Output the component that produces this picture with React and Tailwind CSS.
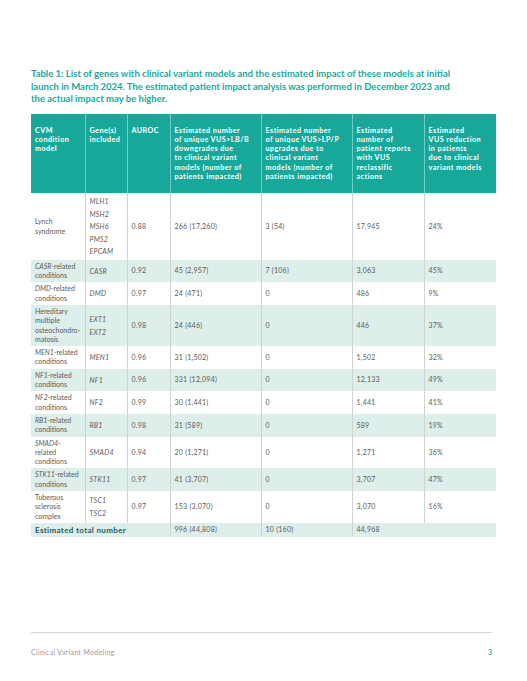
import React from 'react';

// condition lines follow the printed line breaks; the first part of "x-related" is the gene name in italics
const rows = [
  { cond: ['Lynch', 'syndrome'], genes: ['MLH1', 'MSH2', 'MSH6', 'PMS2', 'EPCAM'], auroc: '0.88', down: '266 (17,260)', up: '3 (54)', reports: '17,945', red: '24%' },
  { gene: 'CASR', cond: ['-related', 'conditions'], genes: ['CASR'], auroc: '0.92', down: '45 (2,957)', up: '7 (106)', reports: '3,063', red: '45%' },
  { gene: 'DMD', cond: ['-related', 'conditions'], genes: ['DMD'], auroc: '0.97', down: '24 (471)', up: '0', reports: '486', red: '9%' },
  { cond: ['Hereditary', 'multiple', 'osteochondro-', 'matosis'], genes: ['EXT1', 'EXT2'], auroc: '0.98', down: '24 (446)', up: '0', reports: '446', red: '37%' },
  { gene: 'MEN1', cond: ['-related', 'conditions'], genes: ['MEN1'], auroc: '0.96', down: '31 (1,502)', up: '0', reports: '1,502', red: '32%' },
  { gene: 'NF1', cond: ['-related', 'conditions'], genes: ['NF1'], auroc: '0.96', down: '331 (12,094)', up: '0', reports: '12,133', red: '49%' },
  { gene: 'NF2', cond: ['-related', 'conditions'], genes: ['NF2'], auroc: '0.99', down: '30 (1,441)', up: '0', reports: '1,441', red: '41%' },
  { gene: 'RB1', cond: ['-related', 'conditions'], genes: ['RB1'], auroc: '0.98', down: '31 (589)', up: '0', reports: '589', red: '19%' },
  { gene: 'SMAD4', cond: ['-', 'related', 'conditions'], genes: ['SMAD4'], auroc: '0.94', down: '20 (1,271)', up: '0', reports: '1,271', red: '36%' },
  { gene: 'STK11', cond: ['-related', 'conditions'], genes: ['STK11'], auroc: '0.97', down: '41 (3,707)', up: '0', reports: '3,707', red: '47%' },
  { cond: ['Tuberous', 'sclerosis', 'complex'], genes: ['TSC1', 'TSC2'], auroc: '0.97', down: '153 (3,070)', up: '0', reports: '3,070', red: '16%' },
];

// header lines as they break in the printed table
const heads = [
  ['CVM', 'condition', 'model'],
  ['Gene(s)', 'included'],
  ['AUROC'],
  ['Estimated number', 'of unique VUS>LB/B', 'downgrades due', 'to clinical variant', 'models (number of', 'patients impacted)'],
  ['Estimated number', 'of unique VUS>LP/P', 'upgrades due to', 'clinical variant', 'models (number of', 'patients impacted)'],
  ['Estimated', 'number of', 'patient reports', 'with VUS', 'reclassific', 'actions'],
  ['Estimated', 'VUS reduction', 'in patients', 'due to clinical', 'variant models'],
];

const td = 'px-[4px] py-[2px] align-middle tracking-[0.25px] border-l border-[#cfd3d2] first:border-l-0';

export default function App() {
  return (
    <div className="w-[527px] h-[681px] bg-white font-['Lato',sans-serif] flex flex-col">
      <div className="px-[31px] pt-[68px] flex-1">
        <p className="text-[9.5px] leading-[12.5px] font-bold text-[#1ba89a] whitespace-nowrap">
          Table 1: List of genes with clinical variant models and the estimated impact of these models at initial
          <br />
          launch in March 2024. The estimated patient impact analysis was performed in December 2023 and
          <br />
          the actual impact may be higher.
        </p>

        <table className="mt-[8px] w-[465px] table-fixed border-collapse text-[7px] leading-[9.3px] text-[#5a5a5a]">
          <colgroup>
            <col className="w-[54px]" />
            <col className="w-[42px]" />
            <col className="w-[43px]" />
            <col className="w-[91px]" />
            <col className="w-[91px]" />
            <col className="w-[72px]" />
            <col className="w-[72px]" />
          </colgroup>
          <thead>
            <tr className="bg-[#17a89a]">
              {heads.map((h, i) => (
                <th
                  key={i}
                  className="text-left align-top font-bold text-white text-[7.2px] leading-[9.3px] tracking-[0.45px] px-[4px] pt-[12px] pb-[12px] whitespace-nowrap border-l border-[#6fcdc3] first:border-l-0"
                >
                  {h.map((l, j) => (
                    <div key={j}>{l}</div>
                  ))}
                </th>
              ))}
            </tr>
          </thead>
          <tbody>
            {rows.map((r, i) => (
              <tr key={i} className={i % 2 === 1 ? 'bg-[#deeeea]' : 'bg-white'}>
                <td className="px-[4px] py-[2px] align-middle whitespace-nowrap">
                  {r.cond.map((l, j) => (
                    <div key={j}>
                      {j === 0 && r.gene && <i>{r.gene}</i>}
                      {l}
                    </div>
                  ))}
                </td>
                <td className={td}>
                  {r.genes.map(g => (
                    <div key={g} className="italic leading-[12.5px]">{g}</div>
                  ))}
                </td>
                <td className={td}>{r.auroc}</td>
                <td className={td}>{r.down}</td>
                <td className={td}>{r.up}</td>
                <td className={td}>{r.reports}</td>
                <td className={td}>{r.red}</td>
              </tr>
            ))}
            <tr className="bg-[#deeeea]">
              <td colSpan={3} className="px-[4px] py-[2px] text-[8px] leading-[10px] font-bold text-[#1d5c66] tracking-[0.35px]">
                Estimated total number
              </td>
              <td className={td}>996 (44,808)</td>
              <td className={td}>10 (160)</td>
              <td colSpan={2} className={td}>44,968</td>
            </tr>
          </tbody>
        </table>
      </div>

      <div className="px-[31px] pb-[24px]">
        <div className="border-t border-[#d6d6d6] w-[461px]" />
        <div className="flex justify-between items-center w-[461px] pt-[14px] text-[7px]">
          <span className="text-[#9a9a9a] tracking-[0.3px]">Clinical Variant Modeling</span>
          <span className="text-[#2cb8a8] font-bold">3</span>
        </div>
      </div>
    </div>
  );
}
